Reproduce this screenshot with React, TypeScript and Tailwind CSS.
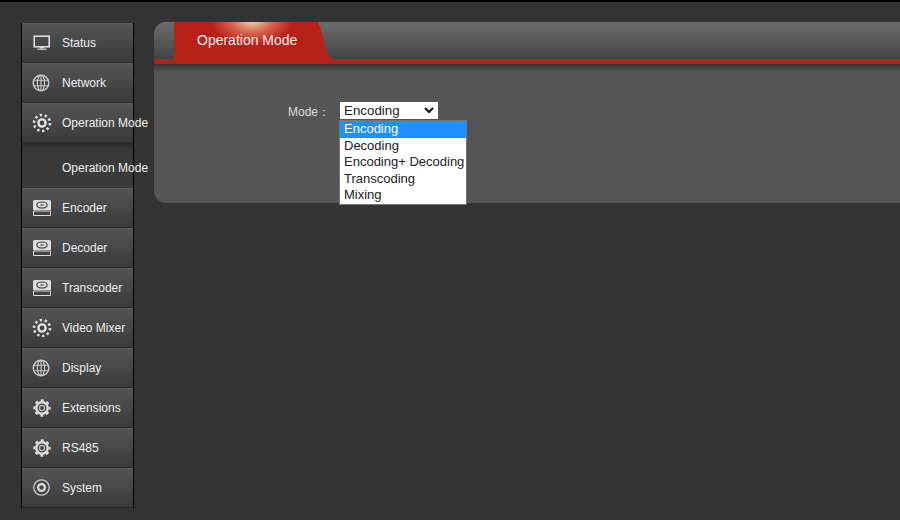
import type { ReactNode } from 'react';

const MonitorIcon = () => (
  <svg width="18" height="16" viewBox="0 0 18 16" fill="none" className="-ml-px">
    <rect x="1.2" y="1.2" width="15" height="10.6" stroke="#ddd" strokeWidth="1.6" />
    <path d="M7 12h4v1.4H7z" fill="#ddd" />
    <path d="M4.5 13.6h9v1.2h-9z" fill="#ddd" />
  </svg>
);

const GlobeIcon = () => (
  <svg width="18" height="18" viewBox="0 0 18 18" fill="none" stroke="#ccc" strokeWidth="1.1" className="-ml-0.5">
    <circle cx="9" cy="9" r="7.8" strokeWidth="1.4" />
    <ellipse cx="9" cy="9" rx="3.6" ry="7.8" />
    <path d="M9 1v16M1.4 6.2h15.2M1.4 11.8h15.2" />
  </svg>
);

const DotsIcon = () => (
  <svg width="20" height="20" viewBox="0 0 20 20" fill="none">
    <circle cx="10" cy="10" r="3.6" stroke="#e4e4e4" strokeWidth="2.4" />
    <circle cx="10" cy="10" r="8" stroke="#ddd" strokeWidth="2.6" strokeDasharray="2.4 2.62" />
  </svg>
);

const DriveIcon = () => (
  <svg width="18" height="16" viewBox="0 0 18 16" fill="none">
    <path d="M1.5 0h15A1.5 1.5 0 0 1 18 1.5V10H0V1.5A1.5 1.5 0 0 1 1.5 0z" fill="#ddd" />
    <ellipse cx="9" cy="5" rx="5.2" ry="3" stroke="#444" strokeWidth="1.2" />
    <ellipse cx="9" cy="5" rx="2" ry="1" fill="#777" />
    <path d="M.5 11h17v4.5H.5z" stroke="#ddd" strokeWidth="1" />
  </svg>
);

const GearIcon = () => (
  <svg width="18" height="18" viewBox="0 0 18 18" fill="none">
    <circle cx="9" cy="9" r="5.7" stroke="#ddd" strokeWidth="2.4" />
    <circle cx="9" cy="9" r="7.6" stroke="#ddd" strokeWidth="2.2" strokeDasharray="3 2.97" strokeDashoffset="1.5" />
    <circle cx="9" cy="9" r="2.6" stroke="#bbb" strokeWidth="1.3" />
  </svg>
);

const RingIcon = () => (
  <svg width="17" height="17" viewBox="0 0 17 17" fill="none" className="-ml-0.5">
    <circle cx="8.5" cy="8.5" r="7.7" stroke="#ccc" strokeWidth="1.3" />
    <circle cx="8.5" cy="8.5" r="3.4" stroke="#ddd" strokeWidth="2.2" />
  </svg>
);

function NavItem({ icon, label }: { icon: ReactNode; label: string }) {
  return (
    <div className="flex h-10 items-center border-b border-[#2b2b2b] bg-gradient-to-b from-[#555555] to-[#3a3a3a] shadow-[inset_0_1px_0_#5c5c5c]">
      <div className="flex w-10 shrink-0 items-center justify-center">{icon}</div>
      <span className="whitespace-nowrap text-xs text-[#eee]">{label}</span>
    </div>
  );
}

const options = ['Encoding', 'Decoding', 'Encoding+ Decoding', 'Transcoding', 'Mixing'];

export default function App() {
  return (
    <div className="h-[520px] w-[900px] overflow-hidden bg-[#333333] font-['Liberation_Sans',Arial,sans-serif]">
      <div className="h-0.5 bg-black" />
      <div className="flex items-start pl-[21px] pt-[20px]">
        <div className="mt-px w-[113px] border-x border-black">
          <NavItem icon={<MonitorIcon />} label="Status" />
          <NavItem icon={<GlobeIcon />} label="Network" />
          <NavItem icon={<DotsIcon />} label="Operation Mode" />
          <div className="flex h-[45px] items-center bg-[#3a3a3a] pl-10 pt-[5px] shadow-[inset_0_5px_4px_-3px_#222]">
            <span className="whitespace-nowrap text-xs text-[#eee]">Operation Mode</span>
          </div>
          <NavItem icon={<DriveIcon />} label="Encoder" />
          <NavItem icon={<DriveIcon />} label="Decoder" />
          <NavItem icon={<DriveIcon />} label="Transcoder" />
          <NavItem icon={<DotsIcon />} label="Video Mixer" />
          <NavItem icon={<GlobeIcon />} label="Display" />
          <NavItem icon={<GearIcon />} label="Extensions" />
          <NavItem icon={<GearIcon />} label="RS485" />
          <NavItem icon={<RingIcon />} label="System" />
        </div>

        <div className="ml-5 h-[181px] flex-1 rounded-l-[12px] bg-[#555555]">
          <div className="h-[37px] rounded-tl-[12px] bg-gradient-to-b from-[#6c6c6c] to-[#444444] pl-5">
            <div className="relative h-[37px] w-[158px] overflow-hidden bg-[#b8201a] [clip-path:polygon(0_0,144px_0,147px_8px,152px_28px,154px_34px,158px_37px,0_37px)]">
              <div className="absolute left-[38px] top-[-24px] h-[46px] w-[80px] bg-[radial-gradient(ellipse_at_center,#f3d0b0_0%,rgba(226,130,100,0.65)_38%,rgba(184,32,26,0)_72%)]" />
              <span className="relative block pl-[23px] pt-[10px] text-sm leading-4 text-[#fbeaea]">Operation Mode</span>
            </div>
          </div>
          <div className="h-[5px] bg-[#b8201a]" />
          <div className="h-2 bg-gradient-to-b from-[#333] to-[#555555]" />
          <div className="relative flex items-start pl-[134px] pt-[30px]">
            <span className="w-[52px] pt-0.5 text-xs leading-[17px] text-[#ddd]">Mode：</span>
            <div className="flex h-[17px] w-[98px] items-center justify-between bg-white pl-1 pr-0.5">
              <span className="text-[13.33px] leading-[17px] text-[#222]">Encoding</span>
              <svg width="10" height="7" viewBox="0 0 10 7" fill="none" className="mr-0.5">
                <path d="M1 1l4 4 4-4" stroke="#111" strokeWidth="2" />
              </svg>
            </div>
            <div className="absolute left-[185px] top-[48px] w-[128px] border border-[#767676] bg-white">
              {options.map((option, i) => (
                <div
                  key={option}
                  className={`h-[16.5px] whitespace-nowrap pl-1 text-[13px] leading-[16.5px] ${i === 0 ? 'bg-[#1e90ff] text-white' : 'text-[#222]'}`}
                >
                  {option}
                </div>
              ))}
            </div>
          </div>
        </div>
      </div>
    </div>
  );
}
